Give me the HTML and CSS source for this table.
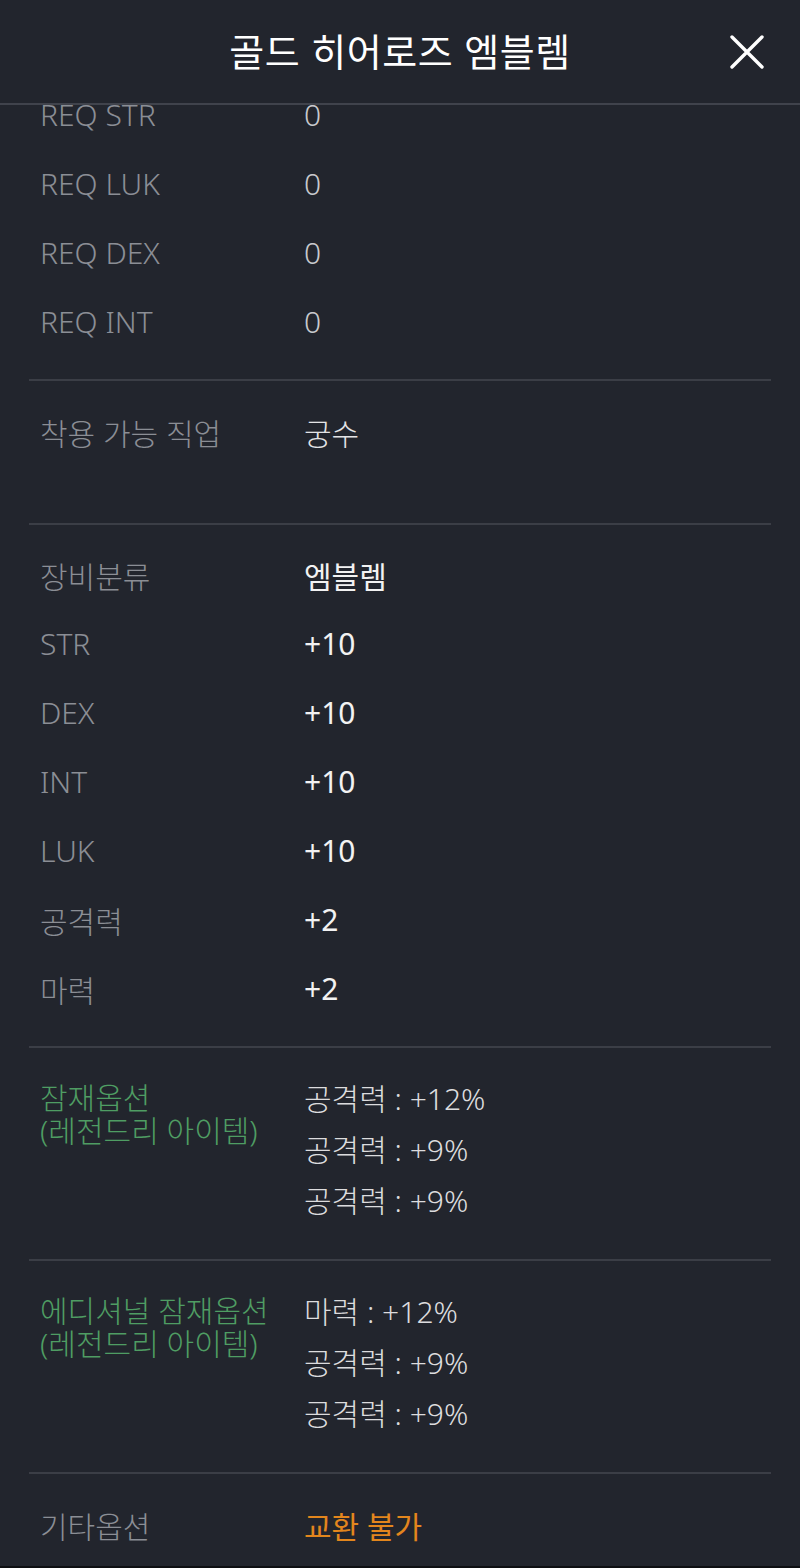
FILE: index.html
```html
<!DOCTYPE html>
<html lang="ko">
<head>
<meta charset="utf-8">
<title>골드 히어로즈 엠블렘</title>
<link rel="stylesheet" href="styles.css">
</head>
<body>
<div class="page">
  <header class="header">
    <h1 class="title">골드 히어로즈 엠블렘</h1>
    <button class="close" aria-label="닫기">
      <svg width="36" height="36" viewBox="0 0 36 36"><path d="M3 3 L33 33 M33 3 L3 33" stroke="#ffffff" stroke-width="3.4" stroke-linecap="round" fill="none"/></svg>
    </button>
  </header>
  <main class="content">
    <section class="section first">
      <div class="row"><span class="label">REQ STR</span><span class="value dim">0</span></div>
      <div class="row"><span class="label">REQ LUK</span><span class="value dim">0</span></div>
      <div class="row"><span class="label">REQ DEX</span><span class="value dim">0</span></div>
      <div class="row"><span class="label">REQ INT</span><span class="value dim">0</span></div>
    </section>
    <section class="section job">
      <div class="row"><span class="label">착용 가능 직업</span><span class="value soft">궁수</span></div>
    </section>
    <section class="section stats">
      <div class="row"><span class="label">장비분류</span><span class="value">엠블렘</span></div>
      <div class="row"><span class="label">STR</span><span class="value">+10</span></div>
      <div class="row"><span class="label">DEX</span><span class="value">+10</span></div>
      <div class="row"><span class="label">INT</span><span class="value">+10</span></div>
      <div class="row"><span class="label">LUK</span><span class="value">+10</span></div>
      <div class="row"><span class="label">공격력</span><span class="value">+2</span></div>
      <div class="row"><span class="label">마력</span><span class="value">+2</span></div>
    </section>
    <section class="section option">
      <div class="opt-label"><div>잠재옵션</div><div>(레전드리 아이템)</div></div>
      <div class="opt-values">
        <div>공격력 : +12%</div>
        <div>공격력 : +9%</div>
        <div>공격력 : +9%</div>
      </div>
    </section>
    <section class="section option">
      <div class="opt-label"><div>에디셔널 잠재옵션</div><div>(레전드리 아이템)</div></div>
      <div class="opt-values">
        <div>마력 : +12%</div>
        <div>공격력 : +9%</div>
        <div>공격력 : +9%</div>
      </div>
    </section>
    <section class="section last">
      <div class="row"><span class="label">기타옵션</span><span class="value orange">교환 불가</span></div>
    </section>
  </main>
</div>
</body>
</html>
```

FILE: styles.css
```css
* { box-sizing: border-box; }
html, body {
  margin: 0;
  padding: 0;
  background: #22252d;
}
body {
  font-family: "Noto Sans", "Noto Sans CJK KR", sans-serif;
  color: #ececec;
  overflow: hidden;
}
.page {
  width: 800px;
  height: 1568px;
  overflow: hidden;
  border-bottom: 2px solid #0e0f12;
}
.header {
  position: relative;
  z-index: 2;
  height: 105px;
  background: #22252d;
  border-bottom: 2px solid #40434c;
  display: flex;
  align-items: center;
  justify-content: center;
}
.title {
  margin: 0;
  font-family: "Noto Sans CJK KR", sans-serif;
  font-size: 38px;
  font-weight: 400;
  color: #ffffff;
  letter-spacing: 0.5px;
  padding-bottom: 4px;
}
.close {
  position: absolute;
  right: 35px;
  top: 34px;
  width: 36px;
  height: 36px;
  padding: 0;
  border: 0;
  background: none;
  display: flex;
}
.content {
  margin-top: -25px;
  padding: 0 29px;
}
.section {
  border-bottom: 2px solid #3b3e46;
  padding: 15px 0 23px;
}
.section.first { padding-top: 0; padding-bottom: 23px; }
.section.job { padding-top: 16px; padding-bottom: 57px; }
.section.last { border-bottom: 0; padding-top: 16px; }
.row {
  display: grid;
  grid-template-columns: 275px 1fr;
  height: 69px;
  align-items: center;
  font-size: 30px;
  font-weight: 300;
}
.label {
  padding-left: 11px;
  color: #8b8e95;
}
.value { color: #f2f2f2; font-weight: 400; }
.value.dim { color: #c9cacd; font-weight: 300; }
.value.soft { color: #e4e4e6; font-weight: 300; }
.value.orange { color: #e3861d; font-weight: 400; }
.option {
  display: grid;
  grid-template-columns: 275px 1fr;
  align-items: start;
  padding: 25px 0 33px;
  font-size: 30px;
  font-weight: 300;
}
.opt-label {
  padding-left: 11px;
  padding-top: 8px;
  line-height: 33px;
  color: #4f9d63;
}
.opt-values {
  line-height: 51px;
  color: #dcdcde;
}
```
